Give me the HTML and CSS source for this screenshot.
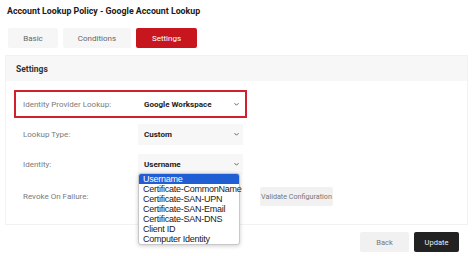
FILE: index.html
```html
<!DOCTYPE html>
<html>
<head>
<meta charset="utf-8">
<link rel="stylesheet" href="styles.css">
</head>
<body>
<div class="title">Account Lookup Policy - Google Account Lookup</div>
<div class="tabs">
  <div class="tab tab-basic">Basic</div>
  <div class="tab tab-cond">Conditions</div>
  <div class="tab tab-active">Settings</div>
</div>
<div class="panel">
  <div class="panel-head">Settings</div>
  <div class="panel-body">
    <div class="row row-hl">
      <div class="label">Identity Provider Lookup:</div>
      <div class="select"><span>Google Workspace</span><svg class="chev" width="7" height="5" viewBox="0 0 7 5"><path d="M1.5 1.2l2 2 2-2" fill="none" stroke="#555" stroke-width="0.9"/></svg></div>
    </div>
    <div class="row">
      <div class="label">Lookup Type:</div>
      <div class="select"><span>Custom</span><svg class="chev" width="7" height="5" viewBox="0 0 7 5"><path d="M1.5 1.2l2 2 2-2" fill="none" stroke="#555" stroke-width="0.9"/></svg></div>
    </div>
    <div class="row">
      <div class="label">Identity:</div>
      <div class="select"><span>Username</span><svg class="chev" width="7" height="5" viewBox="0 0 7 5"><path d="M1.5 1.2l2 2 2-2" fill="none" stroke="#555" stroke-width="0.9"/></svg></div>
      <ul class="dropdown">
        <li class="sel">Username</li>
        <li>Certificate-CommonName</li>
        <li>Certificate-SAN-UPN</li>
        <li>Certificate-SAN-Email</li>
        <li>Certificate-SAN-DNS</li>
        <li>Client ID</li>
        <li>Computer Identity</li>
      </ul>
    </div>
    <div class="row row-revoke">
      <div class="label">Revoke On Failure:</div>
      <div class="select-space"></div>
      <div class="btn-validate">Validate Configuration</div>
    </div>
  </div>
</div>
<div class="footer">
  <div class="btn btn-back">Back</div>
  <div class="btn btn-update">Update</div>
</div>
</body>
</html>
```
FILE: styles.css
```css
* { box-sizing: border-box; }
body {
  margin: 0;
  width: 474px;
  height: 256px;
  background: #fff;
  font-family: Roboto, "Liberation Sans", sans-serif;
  color: #222;
  overflow: hidden;
}
.title {
  font-weight: bold;
  font-size: 8.8px;
  padding: 6px 0 0 7px;
  height: 28px;
  color: #1a1a1a;
}
.tabs {
  display: flex;
  gap: 5px;
  padding-left: 8px;
  height: 20px;
}
.tab {
  display: flex;
  align-items: center;
  justify-content: center;
  font-size: 8px;
  background: #f6f6f6;
  color: #666;
  border-radius: 2px;
}
.tab-basic { width: 50px; }
.tab-cond { width: 68px; }
.tab-active { width: 61px; background: #c8161e; color: #fff; }
.panel {
  margin: 7px 6px 0 5px;
  border: 1px solid #f2f2f2;
  height: 170px;
}
.panel-head {
  background: #f7f7f7;
  height: 25px;
  display: flex;
  align-items: center;
  padding-left: 10px;
  font-size: 8.5px;
  font-weight: bold;
  color: #333;
}
.panel-body {
  padding: 9px 0 0 8px;
  display: flex;
  flex-direction: column;
}
.row {
  position: relative;
  display: flex;
  align-items: center;
  width: 233px;
  height: 22px;
  padding-left: 9px;
  margin-bottom: 8px;
}
.row-hl {
  height: 28px;
  border: 2px solid #d3202f;
  padding-left: 7px;
  margin-bottom: 5px;
}
.label {
  width: 115px;
  font-size: 8px;
  color: #7a7a7a;
}
.select {
  width: 105px;
  height: 21px;
  background: #f7f7f7;
  display: flex;
  align-items: center;
  justify-content: space-between;
  padding: 0 3px 0 6px;
  font-size: 8px;
  font-weight: bold;
  color: #222;
}
.row-hl .select { background: #fff; }
.chev { display: block; }
.select-space { width: 105px; }
.row-revoke {
  width: auto;
  margin-top: 2px;
}
.btn-validate {
  margin-left: 17px;
  width: 73px;
  height: 19px;
  background: #f1f1f1;
  border-radius: 2px;
  font-size: 7.2px;
  color: #777;
  display: flex;
  align-items: center;
  justify-content: center;
  white-space: nowrap;
}
.dropdown {
  position: absolute;
  left: 124px;
  top: 20px;
  width: 102px;
  margin: 0;
  padding: 0;
  list-style: none;
  background: #fff;
  border: 1px solid #c8c8c8;
  border-radius: 3px;
  box-shadow: 0 1px 4px rgba(0,0,0,0.2);
  z-index: 2;
  font-family: "Liberation Sans", Arial, sans-serif;
  font-size: 9px;
  letter-spacing: -0.25px;
  color: #222;
}
.dropdown li {
  height: 10px;
  line-height: 10px;
  padding-left: 4px;
  white-space: nowrap;
}
.dropdown li.sel {
  background: #1f5fd3;
  color: #fff;
  border-radius: 2px 2px 0 0;
}
.footer {
  display: flex;
  justify-content: flex-end;
  gap: 5px;
  padding: 7px 15px 0 0;
}
.btn {
  height: 20px;
  display: flex;
  align-items: center;
  justify-content: center;
  font-size: 7.5px;
  border-radius: 2px;
}
.btn-back { width: 49px; background: #f1f1f1; color: #777; }
.btn-update { width: 45px; background: #222; color: #eee; }
```
